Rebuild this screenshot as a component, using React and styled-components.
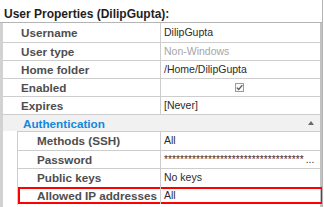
import React from 'react';
import styled, { createGlobalStyle } from 'styled-components';

const Global = createGlobalStyle`
  html, body { margin: 0; padding: 0; background: #fff; }
  body { font-family: "Liberation Sans", Arial, sans-serif; }
`;

const Frame = styled.div`
  width: 323px;
  height: 207px;
  box-sizing: border-box;
  border-right: 1px solid #b4b4b4;
  background: #fff;
  overflow: hidden;
`;

const Header = styled.div`
  height: 15px;
  line-height: 15px;
  padding: 7px 0 0 4px;
  border-bottom: 1px solid #b4b4b4;
  font-size: 12px;
  font-weight: bold;
  color: #1e1e1e;
`;

const Body = styled.div`
  display: flex;
  height: 184px;
`;

const Band = styled.div`
  width: ${p => p.$w}px;
  flex: none;
  background: ${p => p.$color};
`;

const Rows = styled.div`
  flex: 1;
  min-width: 0;
  display: flex;
  flex-direction: column;
`;

const Row = styled.div`
  display: flex;
  flex: none;
  height: ${p => p.$h || 18}px;
  line-height: ${p => (p.$h || 18) - 1}px;
  box-sizing: border-box;
  border-bottom: 1px solid #cdcdcd;
  ${p => p.$marked && `
    position: relative;
    margin: -1px -3px 0 0;
    box-shadow: inset 0 0 0 2px #ff0000;
    border-bottom-color: transparent;
  `}
`;

const Label = styled.div`
  width: ${p => p.$w}px;
  flex: none;
  box-sizing: border-box;
  padding-left: ${p => p.$indent}px;
  border-right: 1px solid #cdcdcd;
  font-size: 11.7px;
  font-weight: bold;
  color: #4e4e4e;
  white-space: nowrap;
`;

const Value = styled.div`
  flex: 1;
  min-width: 0;
  padding: 0 6px 0 3px;
  font-size: 10.5px;
  color: ${p => (p.$muted ? '#a6a6a6' : '#2b2b2b')};
  white-space: nowrap;
  ${p => p.$center && `
    display: flex;
    align-items: center;
    justify-content: center;
    padding: 0;
  `}
`;

const Stars = styled.span`
  font-size: 10px;
  letter-spacing: 0.1px;
`;

const Dots = styled.span`
  margin-left: 2px;
`;

const Check = styled.div`
  width: 9px;
  height: 9px;
  box-sizing: border-box;
  border: 1px solid #9a9a9a;
  background: #fafafa;
  display: flex;
  align-items: center;
  justify-content: center;
  margin-left: -2px;
`;

const GroupHead = styled.div`
  display: flex;
  align-items: center;
  height: 16px;
  flex: none;
  padding: 0 6px 0 20px;
  background: #f1f1f1;
  font-size: 11.7px;
  font-weight: bold;
  color: #1488dc;
`;

const Arrow = styled.span`
  margin-left: auto;
  width: 0;
  height: 0;
  border-left: 3px solid transparent;
  border-right: 3px solid transparent;
  border-bottom: 4px solid #6a6a6a;
`;

const SubList = styled.div`
  margin-left: 14px;
  border-top: 1px solid #cdcdcd;
  border-left: 1px solid #cdcdcd;
  display: flex;
  flex-direction: column;
`;

const main = [
  { label: 'Username', value: 'DilipGupta', h: 20 },
  { label: 'User type', value: 'Non-Windows', muted: true },
  { label: 'Home folder', value: '/Home/DilipGupta' },
  { label: 'Enabled', check: true },
  { label: 'Expires', value: '[Never]' },
];

const auth = [
  { label: 'Methods (SSH)', value: 'All' },
  { label: 'Password', stars: '*'.repeat(35) },
  { label: 'Public keys', value: 'No keys' },
  { label: 'Allowed IP addresses', value: 'All', marked: true },
];

function CheckMark() {
  return (
    <svg width="7" height="7" viewBox="0 0 7 7">
      <path d="M0.8 3.6 L2.7 5.5 L6.3 1.2" fill="none" stroke="#5c5c5c" strokeWidth="1.3" />
    </svg>
  );
}

export default function App() {
  return (
    <>
      <Global />
      <Frame>
        <Header>User Properties (DilipGupta):</Header>
        <Body>
          <Band $w={3} $color="#d2d2d2" />
          <Rows>
            {main.map(r => (
              <Row key={r.label} $h={r.h}>
                <Label $w={158} $indent={18}>{r.label}</Label>
                {r.check ? (
                  <Value $center>
                    <Check><CheckMark /></Check>
                  </Value>
                ) : (
                  <Value $muted={r.muted}>{r.value}</Value>
                )}
              </Row>
            ))}
            <GroupHead>
              Authentication
              <Arrow />
            </GroupHead>
            <SubList>
              {auth.map(r => (
                <Row key={r.label} $h={18.5} $marked={r.marked}>
                  <Label $w={143} $indent={19}>{r.label}</Label>
                  <Value>
                    {r.stars ? <Stars>{r.stars}<Dots>...</Dots></Stars> : r.value}
                  </Value>
                </Row>
              ))}
            </SubList>
          </Rows>
          <Band $w={2} $color="#c2c2c2" />
        </Body>
      </Frame>
    </>
  );
}
